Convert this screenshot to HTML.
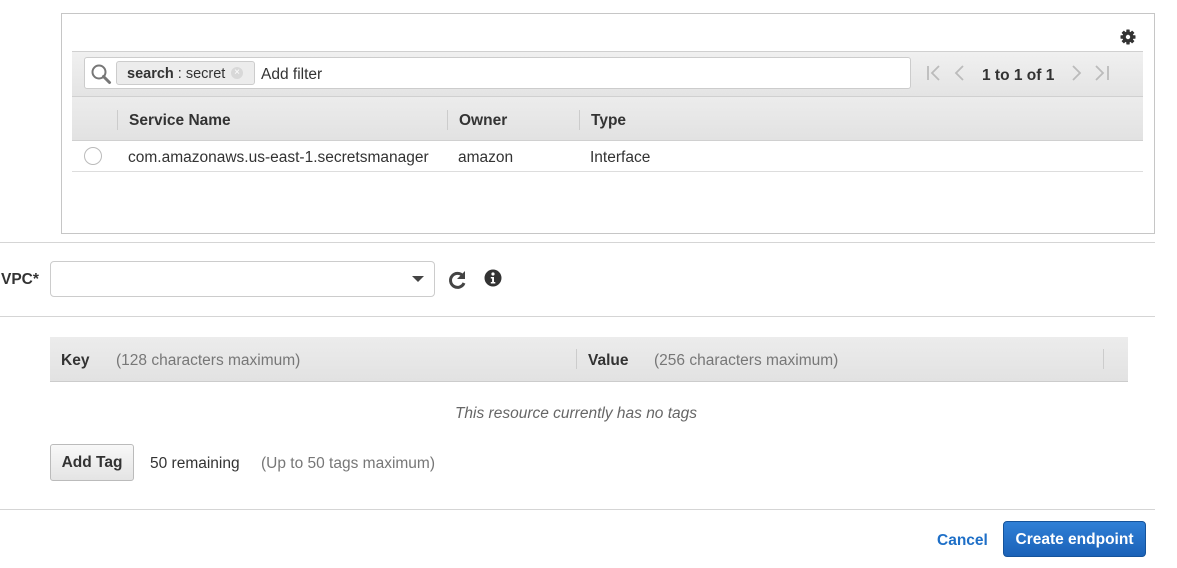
<!DOCTYPE html>
<html><head><style>
*{margin:0;padding:0;box-sizing:border-box}
body{width:1177px;height:568px;background:#fff;font-family:"Liberation Sans",Arial,sans-serif;font-size:15.5px;color:#333;position:relative;overflow:hidden}
.a{position:absolute}
.b{font-weight:bold}
</style></head><body>
<div class="a" style="left:61px;top:13px;width:1094px;height:221px;border:1px solid #c6c6c6"></div>
<svg class="a" style="left:1119px;top:28px" width="18" height="18" viewBox="0 0 18 18"><g fill="#333"><circle cx="9" cy="9" r="5.5"/><rect x="7.3" y="1.5" width="3.4" height="15" rx=".5"/><rect x="7.3" y="1.5" width="3.4" height="15" rx=".5" transform="rotate(45 9 9)"/><rect x="7.3" y="1.5" width="3.4" height="15" rx=".5" transform="rotate(90 9 9)"/><rect x="7.3" y="1.5" width="3.4" height="15" rx=".5" transform="rotate(135 9 9)"/></g><circle cx="9" cy="9" r="2.2" fill="#fff"/></svg>
<div class="a" style="left:72px;top:51px;width:1071px;height:46px;background:linear-gradient(#f0f0f0,#e4e4e4);border-top:1px solid #d0d0d0;border-bottom:1px solid #d0d0d0"></div>
<div class="a" style="left:84px;top:57px;width:827px;height:32px;background:#fff;border:1px solid #ccc;border-radius:3px"></div>
<svg class="a" style="left:90px;top:63px" width="22" height="22" viewBox="0 0 22 22"><circle cx="9" cy="9" r="6.5" fill="none" stroke="#777" stroke-width="2"/><line x1="13.5" y1="13.5" x2="19.5" y2="19.5" stroke="#777" stroke-width="3" stroke-linecap="round"/></svg>
<div class="a" style="left:116px;top:61px;width:139px;height:24px;background:#ececec;border:1px solid #ccc;border-radius:3px"></div>
<div class="a" style="left:127px;top:66px;font-size:14.5px"><span class="b">search</span> : secret</div>
<div class="a" style="left:231px;top:67px;width:12px;height:12px;border-radius:50%;background:#d8d8d8;color:#fff;font-size:10px;line-height:12px;text-align:center">×</div>
<div class="a" style="left:261px;top:66px">Add filter</div>
<svg class="a" style="left:926px;top:65px" width="190" height="16" viewBox="0 0 190 16" fill="none" stroke="#bbb" stroke-width="1.8"><path d="M2 1v14M13 1L6 8l7 7"/><path d="M37 1l-7 7 7 7"/><path d="M147 1l7 7-7 7"/><path d="M170 1l7 7-7 7M182 1v14"/></svg>
<div class="a b" style="left:982px;top:67px">1 to 1 of 1</div>
<div class="a" style="left:72px;top:97px;width:1071px;height:44px;background:linear-gradient(#ececec,#e2e2e2);border-bottom:1px solid #d0d0d0"></div>
<div class="a" style="left:117px;top:110px;width:1px;height:20px;background:#ccc"></div>
<div class="a" style="left:447px;top:110px;width:1px;height:20px;background:#ccc"></div>
<div class="a" style="left:579px;top:110px;width:1px;height:20px;background:#ccc"></div>
<div class="a b" style="left:129px;top:112px">Service Name</div>
<div class="a b" style="left:459px;top:112px">Owner</div>
<div class="a b" style="left:591px;top:112px">Type</div>
<div class="a" style="left:84px;top:147px;width:18px;height:18px;border:1px solid #bbb;border-radius:50%"></div>
<div class="a" style="left:128px;top:149px">com.amazonaws.us-east-1.secretsmanager</div>
<div class="a" style="left:458px;top:149px">amazon</div>
<div class="a" style="left:590px;top:149px">Interface</div>
<div class="a" style="left:72px;top:171px;width:1071px;height:1px;background:#ddd"></div>
<div class="a" style="left:0;top:242px;width:1155px;height:1px;background:#d5d5d5"></div>
<div class="a b" style="left:1px;top:271px">VPC*</div>
<div class="a" style="left:50px;top:261px;width:385px;height:36px;border:1px solid #ccc;border-radius:4px"></div>
<svg class="a" style="left:411px;top:275px" width="14" height="8"><path d="M1 1h12l-6 6z" fill="#444"/></svg>
<svg class="a" style="left:446px;top:269px" width="22" height="22" viewBox="0 0 22 22"><path d="M17 7A7 7 0 1 0 18 14" fill="none" stroke="#444" stroke-width="3"/><path d="M19 2v8h-8z" fill="#444"/></svg>
<svg class="a" style="left:484px;top:269px" width="18" height="18" viewBox="0 0 18 18"><circle cx="9" cy="9" r="8.5" fill="#333"/><circle cx="9" cy="5" r="1.6" fill="#fff"/><path d="M6.8 8h3.2v5h1.3v1.5H6.8V13h1.3V9.5H6.8z" fill="#fff"/></svg>
<div class="a" style="left:0;top:316px;width:1155px;height:1px;background:#d5d5d5"></div>
<div class="a" style="left:50px;top:337px;width:1078px;height:45px;background:linear-gradient(#ececec,#e2e2e2);border-bottom:1px solid #ccc"></div>
<div class="a b" style="left:61px;top:352px">Key</div>
<div class="a" style="left:116px;top:352px;color:#777">(128 characters maximum)</div>
<div class="a" style="left:576px;top:349px;width:1px;height:20px;background:#ccc"></div>
<div class="a b" style="left:588px;top:352px">Value</div>
<div class="a" style="left:654px;top:352px;color:#777">(256 characters maximum)</div>
<div class="a" style="left:1103px;top:349px;width:1px;height:20px;background:#ccc"></div>
<div class="a" style="left:0;top:405px;width:1152px;text-align:center;font-style:italic;color:#666">This resource currently has no tags</div>
<div class="a b" style="left:50px;top:444px;width:84px;height:37px;border:1px solid #bbb;border-radius:3px;background:linear-gradient(#f8f8f8,#e4e4e4);text-align:center;line-height:36px">Add Tag</div>
<div class="a" style="left:150px;top:455px">50 remaining</div>
<div class="a" style="left:261px;top:455px;color:#777">(Up to 50 tags maximum)</div>
<div class="a" style="left:0;top:509px;width:1155px;height:1px;background:#d5d5d5"></div>
<div class="a b" style="left:937px;top:532px;color:#1e6fc7">Cancel</div>
<div class="a b" style="left:1003px;top:521px;width:143px;height:36px;border:1px solid #15539b;border-radius:4px;background:linear-gradient(#2f7fd6,#1b62b8);color:#fff;text-align:center;line-height:35px">Create endpoint</div>
</body></html>
